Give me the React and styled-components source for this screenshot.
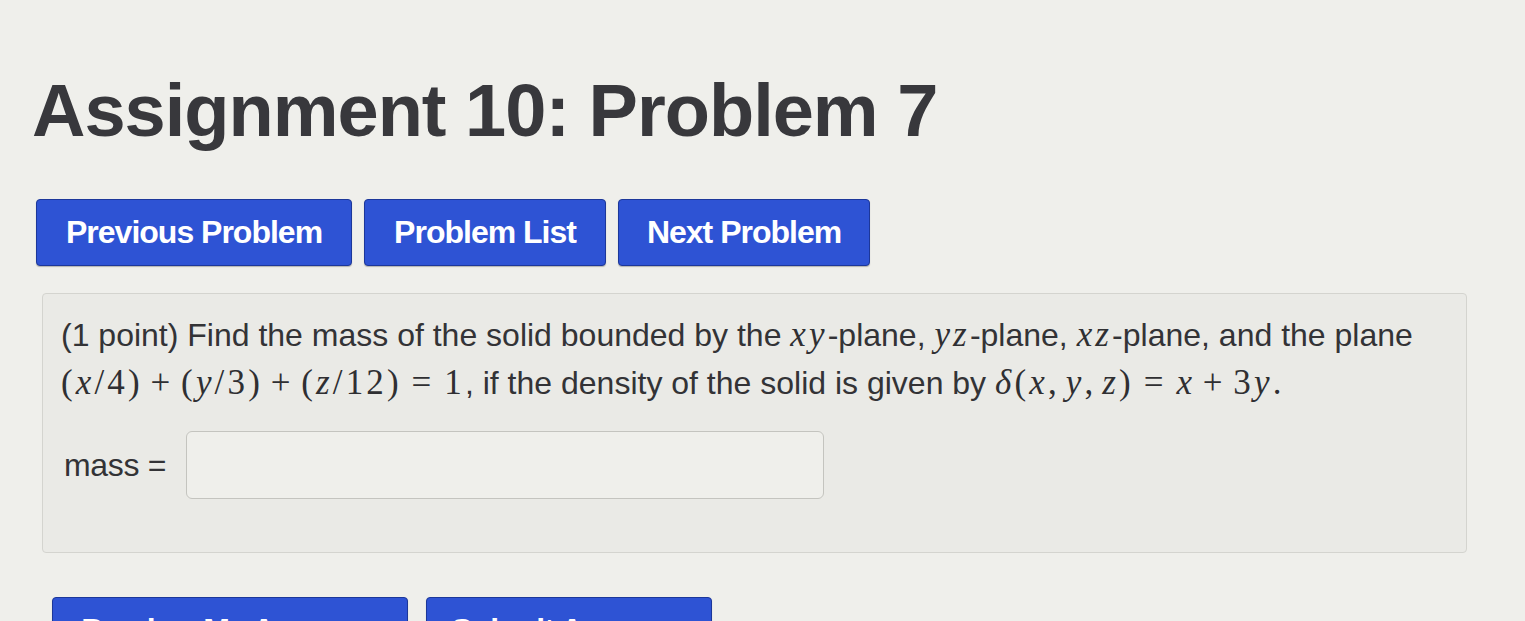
import React from "react";
import styled, { createGlobalStyle } from "styled-components";

const GlobalStyle = createGlobalStyle`
  html, body {
    margin: 0;
    padding: 0;
    background: #efefeb;
  }
  body {
    font-family: "Liberation Sans", Arial, sans-serif;
    color: #333336;
    overflow: hidden;
  }
`;

const Page = styled.div`
  width: 1525px;
  height: 621px;
  overflow: hidden;
  padding: 0 36px;
  box-sizing: border-box;
`;

const Title = styled.h1`
  margin: 74px 0 51px -4px;
  font-size: 74px;
  line-height: 1;
  font-weight: 700;
  letter-spacing: -1px;
  color: #38383c;
`;

const ButtonRow = styled.div`
  display: flex;
  gap: ${(p) => p.$gap || 12}px;
  margin-left: ${(p) => p.$indent || 0}px;
`;

const NavButton = styled.button`
  height: 67px;
  width: ${(p) => (p.$w ? `${p.$w}px` : "auto")};
  padding: 0 ${(p) => p.$pad ?? 28}px;
  border: 1px solid #1c379a;
  border-radius: 4px;
  background: #2e53d4;
  color: #fff;
  font-family: "Liberation Sans", Arial, sans-serif;
  font-size: 32px;
  font-weight: 700;
  letter-spacing: -1px;
  white-space: nowrap;
  box-shadow: 0 1px 1px rgba(0, 0, 0, 0.25);
  cursor: pointer;
`;

const Panel = styled.div`
  margin: 27px 22px 44px 6px;
  height: 260px;
  box-sizing: border-box;
  padding: 17px 18px 0;
  border: 1px solid #d4d4cf;
  border-radius: 4px;
  background: #eaeae6;
`;

const Text = styled.p`
  margin: 0;
  font-size: 32px;
  line-height: 47px;
  letter-spacing: 0;
  color: #333336;
  white-space: nowrap;
`;

/* MathJax-like inline math: serif, roomy glyph spacing */
const Math = styled.span`
  font-family: "Liberation Serif", "Times New Roman", serif;
  font-size: 35px;
  letter-spacing: 0.09em;
  color: #2f2f32;
`;

const V = styled.i`
  font-style: italic;
`;

const Op = styled.span`
  margin: 0 ${(p) => p.$sp || 0.22}em;
`;

const Sep = styled.span`
  margin-right: 0.17em;
`;

const AnswerRow = styled.div`
  display: flex;
  align-items: center;
  gap: 20px;
  margin-top: 24px;
  padding-left: 3px;
`;

const Label = styled.span`
  font-size: 32px;
  letter-spacing: -0.3px;
`;

const AnswerInput = styled.input`
  width: 638px;
  height: 68px;
  box-sizing: border-box;
  border: 1px solid #c4c4bf;
  border-radius: 6px;
  background: #efefeb;
  font-size: 26px;
`;

export default function App() {
  return (
    <Page>
      <GlobalStyle />
      <Title>Assignment 10: Problem 7</Title>
      <ButtonRow>
        <NavButton $pad={29}>Previous Problem</NavButton>
        <NavButton $pad={29}>Problem List</NavButton>
        <NavButton $pad={28}>Next Problem</NavButton>
      </ButtonRow>
      <Panel>
        <Text>
          (1 point) Find the mass of the solid bounded by the{" "}
          <Math>
            <V>xy</V>
          </Math>
          -plane,{" "}
          <Math>
            <V>yz</V>
          </Math>
          -plane,{" "}
          <Math>
            <V>xz</V>
          </Math>
          -plane, and the plane
          <br />
          <Math>
            (<V>x</V>/4)<Op>+</Op>(<V>y</V>/3)<Op>+</Op>(<V>z</V>/12)
            <Op $sp={0.28}>=</Op>1
          </Math>
          , if the density of the solid is given by{" "}
          <Math>
            <V>δ</V>(<V>x</V>,<Sep /><V>y</V>,<Sep /><V>z</V>)
            <Op $sp={0.28}>=</Op>
            <V>x</V>
            <Op>+</Op>3<V>y</V>.
          </Math>
        </Text>
        <AnswerRow>
          <Label>mass =</Label>
          <AnswerInput type="text" />
        </AnswerRow>
      </Panel>
      <ButtonRow $indent={16} $gap={18}>
        <NavButton $w={356} $pad={0}>Preview My Answers</NavButton>
        <NavButton $w={286} $pad={0}>Submit Answers</NavButton>
      </ButtonRow>
    </Page>
  );
}
